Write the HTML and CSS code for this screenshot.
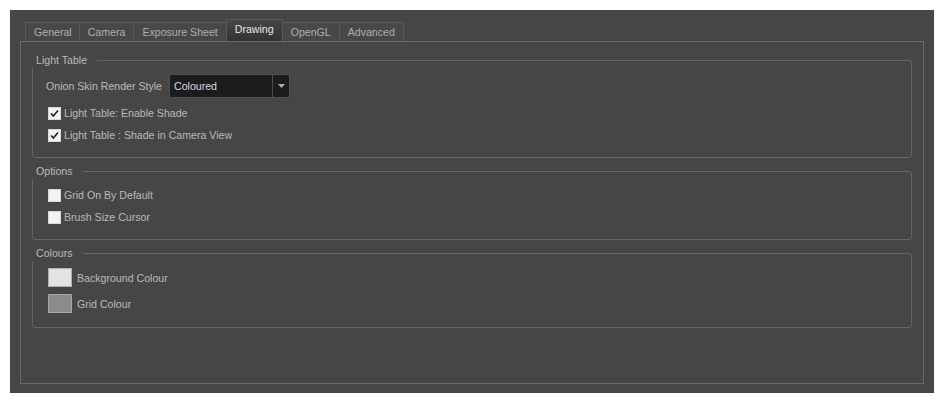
FILE: index.html
```html
<!DOCTYPE html>
<html>
<head>
<meta charset="utf-8">
<link rel="stylesheet" href="styles.css">
</head>
<body>
<div class="window">
  <div class="tabs">
    <div class="tab">General</div>
    <div class="tab">Camera</div>
    <div class="tab">Exposure Sheet</div>
    <div class="tab active">Drawing</div>
    <div class="tab">OpenGL</div>
    <div class="tab">Advanced</div>
  </div>
  <div class="pane">
    <div class="group g1">
      <div class="gtitle">Light Table</div>
      <div class="row combo-row">
        <span class="label">Onion Skin Render Style</span>
        <div class="combo"><span class="combo-text">Coloured</span><span class="combo-btn"><svg width="7" height="4" viewBox="0 0 7 4"><path d="M0 0h7L3.5 4z" fill="#b0b0b0"/></svg></span></div>
      </div>
      <div class="row check-row"><span class="check on"><svg width="11" height="11" viewBox="0 0 11 11"><path d="M2 5.5l2.3 2.5L9 2.5" fill="none" stroke="#222" stroke-width="1.6"/></svg></span><span class="label">Light Table: Enable Shade</span></div>
      <div class="row check-row"><span class="check on"><svg width="11" height="11" viewBox="0 0 11 11"><path d="M2 5.5l2.3 2.5L9 2.5" fill="none" stroke="#222" stroke-width="1.6"/></svg></span><span class="label">Light Table : Shade in Camera View</span></div>
    </div>
    <div class="group g2">
      <div class="gtitle">Options</div>
      <div class="row check-row"><span class="check"></span><span class="label">Grid On By Default</span></div>
      <div class="row check-row"><span class="check"></span><span class="label">Brush Size Cursor</span></div>
    </div>
    <div class="group g3">
      <div class="gtitle">Colours</div>
      <div class="row swatch-row"><span class="swatch bg"></span><span class="label">Background Colour</span></div>
      <div class="row swatch-row"><span class="swatch grid"></span><span class="label">Grid Colour</span></div>
    </div>
  </div>
</div>
</body>
</html>
```
FILE: styles.css
```css
* { box-sizing: border-box; }
html, body { margin: 0; padding: 0; background: #ffffff; }
body {
  font-family: "Liberation Sans", Arial, sans-serif;
  font-size: 10.6px;
  color: #bababa;
}
.window {
  margin: 10px;
  width: 924px;
  height: 383px;
  background: #464646;
  padding: 9px 10px 0 10px;
}
.tabs {
  display: flex;
  align-items: flex-end;
  margin-left: 5px;
  height: 22px;
}
.tab {
  height: 19px;
  padding: 0 8px;
  line-height: 19px;
  border: 1px solid #5a5a5a;
  border-bottom: none;
  border-left: none;
  border-radius: 2px 2px 0 0;
  background: #484848;
  color: #a9afbb;
}
.tab:first-child { border-left: 1px solid #5a5a5a; padding: 0 7px 0 8px; }
.tab.active {
  height: 22px;
  line-height: 19px;
  background: linear-gradient(#474747, #333333);
  color: #e2e6ee;
  border-left: 1px solid #5a5a5a;
  margin-left: -1px;
  padding: 0 8px;
  position: relative;
  z-index: 1;
}
.pane {
  border: 1px solid #6a6a6a;
  height: 343px;
  padding: 18px 11px 0 11px;
}
.group {
  position: relative;
  border: 1px solid #666666;
  border-radius: 3px;
  margin-bottom: 13px;
}
.gtitle {
  position: absolute;
  left: -1px;
  top: -7px;
  background: #464646;
  padding: 0 10px 0 4px;
  line-height: 13px;
  height: 14px;
}
.g1 { padding: 13px 0 11px 13px; }
.g2 { padding: 12px 0 11px 15px; }
.g3 { padding: 14px 0 14px 15px; }
.row { display: flex; align-items: center; }
.combo-row { height: 24px; }
.combo-row .label { margin-right: 7px; }
.combo {
  width: 121px;
  height: 24px;
  display: flex;
  background: #1c1c1c;
  border: 1px solid #4e4e4e;
}
.combo-text {
  flex: 1;
  padding-left: 4px;
  line-height: 22px;
  color: #d0d8e6;
}
.combo-btn {
  width: 17px;
  border-left: 1px solid #4e4e4e;
  display: flex;
  align-items: center;
  justify-content: center;
}
.g1 .check-row { padding-left: 2px; }
.g1 .combo-row + .check-row { margin-top: 4px; }
.check-row { height: 22px; }
.check {
  width: 13px;
  height: 13px;
  background: #f4f4f4;
  border: 1px solid #d8d8d8;
  margin-right: 3px;
  display: flex;
  align-items: center;
  justify-content: center;
}
.swatch {
  width: 24px;
  height: 19px;
  border: 1px solid #9a9a9a;
  margin-right: 5px;
}
.swatch.bg { background: #e4e4e4; border-color: #b0b0b0; }
.swatch.grid { background: #8c8c8c; border-color: #a6a6a6; }
.swatch-row + .swatch-row { margin-top: 7px; }
```
